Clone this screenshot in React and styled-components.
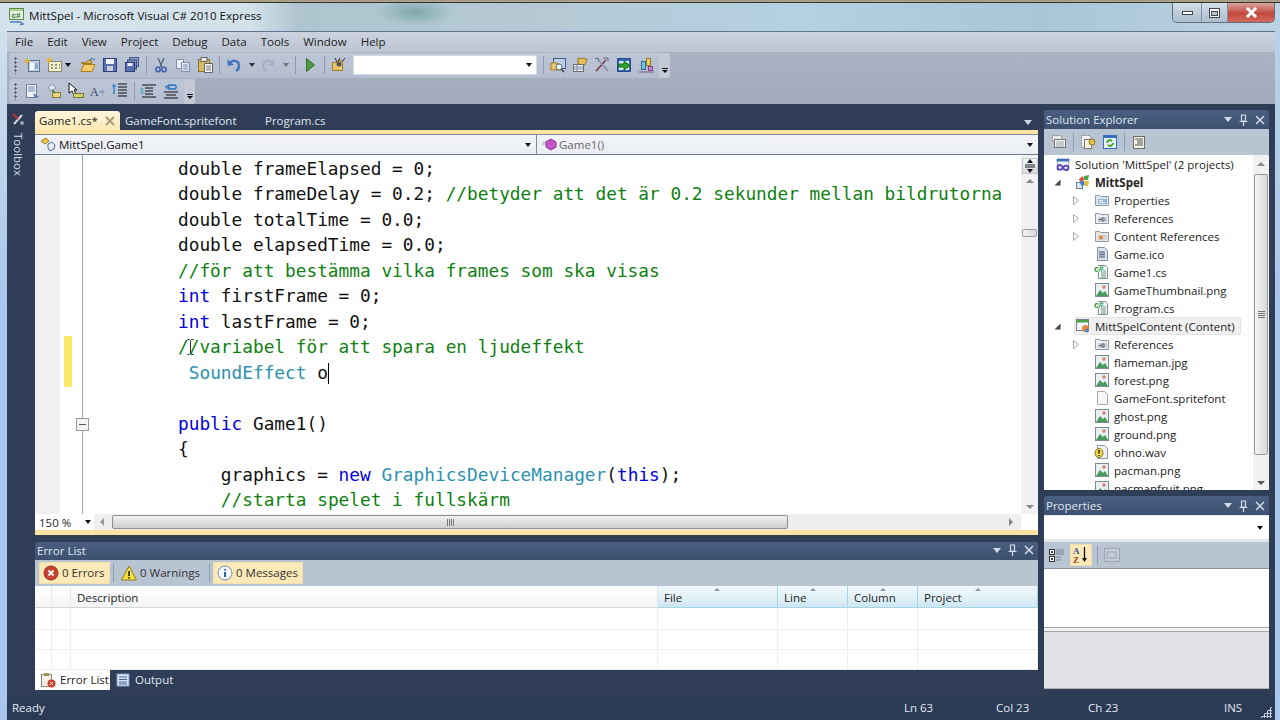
import React from 'react'
import styled, { createGlobalStyle } from 'styled-components'

const UI = '"Open Sans", "Noto Sans", sans-serif'
const MONO = '"DejaVu Sans Mono", "Liberation Mono", monospace'

const Global = createGlobalStyle`
    html, body { margin: 0; padding: 0; width: 1280px; height: 720px; overflow: hidden; }
    * { box-sizing: border-box; }
    body { font-family: ${UI}; font-size: 11.5px; color: #1e1e1e; }
`

const Window = styled.div`
    position: relative;
    width: 1280px;
    height: 720px;
    display: flex;
    flex-direction: column;
    overflow: hidden;
    padding: 3px 5px 0 7px;
    background:
        linear-gradient(#a89e86 0 2px, #35352f 2px 3px, transparent 3px),
        linear-gradient(#d5e3ec 0, #a9c6ec 300px) left / 7px 100% no-repeat,
        linear-gradient(#bcd3e4 0, #a9c6ec 300px) right / 5px 100% no-repeat,
        radial-gradient(ellipse 40px 14px at 415px 12px, #7fa9ab, transparent),
        linear-gradient(90deg, #d5e3ec 0, #d3e2ea 250px, #aec4cf 300px, #b5cad5 560px, #b4d0e2 800px, #a9c5d8 1040px, #bcd3e4 1280px);
`

const TitleBar = styled.div`
    height: 28px;
    flex: none;
    display: flex;
    align-items: center;
    gap: 3px;
    padding: 0 0 3px 1px;
    font-size: 11.6px;
    color: #111;
    position: relative;
`

const CaptionButtons = styled.div`
    position: absolute;
    top: 0;
    right: 0;
    display: flex;
    height: 20px;
    border: 1px solid #5f6f7f;
    border-top: none;
    border-radius: 0 0 5px 5px;
    overflow: hidden;
`

const CaptionButton = styled.div`
    width: ${p => p.$w}px;
    display: flex;
    align-items: center;
    justify-content: center;
    border-left: ${p => p.$first ? 'none' : '1px solid #7f8f9f'};
    background: ${p => p.$close
        ? 'linear-gradient(#d9a39a, #c34a3f 55%, #d06a5a)'
        : 'linear-gradient(#d2dfe8, #bccdd9 50%, #aebfcc)'};
`

const Client = styled.div`
    flex: 1;
    display: flex;
    flex-direction: column;
    border-top: 1px solid #5e7590;
    min-height: 0;
`

const MenuBar = styled.div`
    height: 20px;
    flex: none;
    display: flex;
    align-items: center;
    padding: 0 0 1px 8px;
    gap: 14px;
    background: linear-gradient(#ccd3de, #bcc4d2);
    color: #222;
    font-size: 11.5px;
`

const ToolbarTray = styled.div`
    height: 52px;
    flex: none;
    display: flex;
    flex-direction: column;
    background: linear-gradient(#aab3c3, #a0aaba);
`

const ToolbarRow = styled.div`
    height: 26px;
    display: flex;
    align-items: center;
`

const ToolStrip = styled.div`
    height: 25px;
    display: flex;
    align-items: center;
    padding-left: 5px;
    background: linear-gradient(#bcc6d6, #b3bdce);
    border-radius: 3px;
    margin-left: 2px;
`

const Grip = styled.div`
    width: 3px;
    height: 17px;
    margin-right: 4px;
    background: radial-gradient(circle at 1.5px 1.5px, #5a6578 1px, transparent 1.2px) 0 0 / 3px 4px;
`

const ToolIcon = styled.span`
    display: inline-flex;
    width: ${p => p.$w || 22}px;
    height: 20px;
    align-items: center;
    justify-content: center;
    flex: none;
`

const ToolSep = styled.div`
    width: 1px;
    height: 18px;
    margin: 0 3px;
    background: #8f9aae;
    flex: none;
`

const Overflow = styled.div`
    align-self: stretch;
    width: 11px;
    margin-left: 2px;
    background: #c3cad6;
    border-radius: 0 3px 3px 0;
    display: flex;
    flex-direction: column;
    justify-content: flex-end;
    align-items: center;
    padding-bottom: 5px;
    &::before { content: ''; width: 6px; height: 1px; background: #111; margin-bottom: 1px; }
    &::after { content: ''; border: 3px solid transparent; border-top-color: #111; border-bottom: none; }
`

const ToolCombo = styled.div`
    width: 184px;
    height: 20px;
    margin: 0 3px;
    background: #fff;
    border: 1px solid #d4d9e2;
    display: flex;
    align-items: center;
    justify-content: flex-end;
    padding-right: 4px;
`

const Caret = styled.span`
    display: block;
    width: 0;
    height: 0;
    flex: none;
    margin: 0 ${p => p.$mr || 0}px 0 ${p => p.$ml || 0}px;
    border: ${p => p.$big ? 4 : 3}px solid transparent;
    border-top: ${p => p.$big ? 5 : 4}px solid ${p => p.$color || '#111'};
    border-bottom: none;
`

const Dock = styled.div`
    flex: 1;
    display: flex;
    min-height: 0;
    background: #2f3d56;
`

const ToolboxStrip = styled.div`
    width: 28px;
    flex: none;
    display: flex;
    flex-direction: column;
    align-items: center;
    padding: 8px 5px 0 0;
    gap: 7px;
`

const ToolboxLabel = styled.div`
    writing-mode: vertical-lr;
    color: #d3dae6;
    font-size: 11.5px;
`

const Center = styled.div`
    width: 1003px;
    flex: none;
    display: flex;
    flex-direction: column;
`

const TabStrip = styled.div`
    height: 19px;
    margin-top: 7px;
    flex: none;
    display: flex;
    align-items: stretch;
    position: relative;
`

const DocTab = styled.div`
    width: ${p => p.$w}px;
    padding-left: ${p => p.$pl || 0}px;
    display: flex;
    align-items: center;
    justify-content: space-between;
    color: ${p => p.$active ? '#222' : '#dfe5ef'};
    border-radius: ${p => p.$active ? '3px 3px 0 0' : '0'};
    background: ${p => p.$active ? 'linear-gradient(#fdf6dc, #fce9b4)' : 'transparent'};
`

const TabClose = styled.span`
    margin-right: 5px;
    display: inline-flex;
`

const TabMenu = styled.div`
    position: absolute;
    right: 6px;
    top: 9px;
`

const GoldBar = styled.div`
    height: ${p => p.$h}px;
    flex: none;
    background: #fbe3a4;
`

const NavBar = styled.div`
    height: 21px;
    flex: none;
    display: flex;
    background: linear-gradient(#f2f4f8, #eaedf2);
    border-top: 1px solid #7d8aa0;
    border-bottom: 1px solid #6f7c90;
`

const NavCell = styled.div`
    width: ${p => p.$w};
    flex: ${p => p.$w ? 'none' : 1};
    display: flex;
    align-items: center;
    gap: 1px;
    padding: 0 5px;
    color: ${p => p.$muted ? '#666' : '#111'};
    border-right: ${p => p.$w ? '1px solid #7d8aa0' : 'none'};
`

const NavText = styled.span`
    flex: 1;
`

const EditorArea = styled.div`
    height: 359px;
    flex: none;
    display: flex;
    background: #fff;
    position: relative;
`

const Margin = styled.div`
    width: 25px;
    flex: none;
    background: #f0f0f0;
`

const Outline = styled.div`
    width: 118px;
    flex: none;
    position: relative;
    &::after {
        content: '';
        position: absolute;
        top: 0;
        bottom: 0;
        left: 22px;
        width: 1px;
        background: #a5a5a5;
    }
`

const ChangeBar = styled.div`
    position: absolute;
    left: 4px;
    top: 181px;
    width: 8px;
    height: 51px;
    background: #fce96a;
`

const Collapse = styled.div`
    position: absolute;
    left: 16px;
    top: 263px;
    width: 13px;
    height: 13px;
    z-index: 1;
    background: #f3f3f3;
    border: 1px solid #9a9a9a;
    display: flex;
    align-items: center;
    justify-content: center;
    &::after { content: ''; width: 7px; height: 1px; background: #555; }
`

const Code = styled.div`
    flex: 1;
    overflow: hidden;
    padding-top: 0.5px;
    font-family: ${MONO};
    font-size: 17.8px;
    color: #111;
`

const Line = styled.div`
    height: 25.5px;
    line-height: 25.5px;
    white-space: pre;
`

const Kw = styled.span` color: #0000e0; `
const Cm = styled.span` color: #0f7f12; `
const Ty = styled.span` color: #2b91af; `

const TextCaret = styled.span`
    display: inline-block;
    width: 1px;
    height: 21px;
    background: #000;
    vertical-align: -5px;
`

const IBeam = styled.svg`
    position: absolute;
    left: 152px;
    top: 184px;
`

const VScroll = styled.div`
    width: 17px;
    flex: none;
    display: flex;
    flex-direction: column;
    align-items: center;
    background: #f1f1f1;
    position: relative;
`

const Splitter = styled.div`
    width: 16px;
    height: 16px;
    margin-top: 3px;
    background: linear-gradient(#f4f5f7, #d5d8de);
    border: 1px solid #c3c7cf;
    display: flex;
    align-items: center;
    justify-content: center;
`

const ArrowUp = styled.span`
    width: 0;
    height: 0;
    border: 4px solid transparent;
    border-bottom: 4px solid #8a8a8a;
    border-top: none;
    margin-top: ${p => p.$mt || 0}px;
`

const ArrowDown = styled.span`
    position: absolute;
    bottom: ${p => p.$b}px;
    width: 0;
    height: 0;
    border: 4px solid transparent;
    border-top: 4px solid ${p => p.$c || '#8a8a8a'};
    border-bottom: none;
`

const VThumb = styled.div`
    position: absolute;
    top: ${p => p.$top}px;
    height: ${p => p.$h}px;
    left: 1px;
    right: 1px;
    background: linear-gradient(90deg, #f4f4f4, #d8d8d8);
    border: 1px solid #9a9a9a;
    border-radius: 2px;
    display: flex;
    align-items: center;
    justify-content: center;
`

const GripLines = styled.span`
    width: 7px;
    height: 7px;
    background: repeating-linear-gradient(#777 0 1px, transparent 1px 2px);
`

const HScrollRow = styled.div`
    height: 16px;
    flex: none;
    display: flex;
    align-items: stretch;
    background: #fff;
`

const ZoomBox = styled.div`
    width: 59px;
    flex: none;
    display: flex;
    align-items: center;
    justify-content: space-between;
    padding: 0 3px 0 4px;
    background: #fff;
`

const HTrack = styled.div`
    flex: 1;
    position: relative;
    background: #efefef;
    display: flex;
    align-items: center;
`

const HThumb = styled.div`
    position: absolute;
    left: 18px;
    width: 676px;
    top: 1px;
    bottom: 1px;
    background: linear-gradient(#f2f2f2, #cfcfcf);
    border: 1px solid #8f8f8f;
    border-radius: 2px;
    display: flex;
    align-items: center;
    justify-content: center;
`

const HGrip = styled.span`
    width: 7px;
    height: 7px;
    background: repeating-linear-gradient(90deg, #777 0 1px, transparent 1px 2px);
`

const ArrowSide = styled.span`
    position: absolute;
    ${p => p.$left ? `left: ${p.$left}px;` : `right: ${p.$right}px;`}
    width: 0;
    height: 0;
    border: 4px solid transparent;
    ${p => p.$left ? 'border-right: 4px solid #999; border-left: none;' : 'border-left: 4px solid #888; border-right: none;'}
`

const Corner = styled.div`
    width: 17px;
    flex: none;
    background: #fff;
`

const PaneGap = styled.div`
    height: ${p => p.$h}px;
    flex: none;
`

const PaneTitle = styled.div`
    height: ${p => p.$h || 18}px;
    flex: none;
    display: flex;
    align-items: center;
    justify-content: space-between;
    padding: 0 4px ${p => p.$h ? 0 : 2}px 2px;
    color: #dfe6f0;
    background: linear-gradient(#4a5f80, #3d5070);
    border-radius: 2px 2px 0 0;
`

const PaneActions = styled.div`
    display: flex;
    align-items: center;
    gap: 7px;
`

const FilterBar = styled.div`
    height: 26px;
    flex: none;
    display: flex;
    align-items: center;
    padding-left: 4px;
    background: #b9c4d2;
`

const FilterButton = styled.div`
    height: 22px;
    width: ${p => p.$w}px;
    padding: 0 0 1px 3px;
    display: flex;
    align-items: center;
    gap: 3px;
    color: #333;
    background: ${p => p.$on ? '#fce9b8' : 'transparent'};
    border: 1px solid ${p => p.$on ? '#f3dfae' : 'transparent'};
`

const FilterSep = styled.div`
    width: 1px;
    height: 18px;
    margin: 0 3px;
    background: #8f9aae;
`

const GridHead = styled.div`
    height: 22px;
    flex: none;
    display: grid;
    grid-template-columns: 17px 19px 587px 120px 70px 70px 120px;
`

const HeadCell = styled.div`
    position: relative;
    padding: 1px 0 0 6px;
    display: flex;
    align-items: center;
    color: #222;
    background: ${p => p.$hot
        ? 'linear-gradient(#eef8fc, #e4f2f8 50%, #cde6f1)'
        : 'linear-gradient(#fff, #f3f4f6)'};
    border-right: 1px solid ${p => p.$hot ? '#a6d5e6' : '#e4e6ea'};
    border-bottom: 1px solid ${p => p.$hot ? '#a6d5e6' : '#d5d5d5'};
`

const SortMark = styled.span`
    position: absolute;
    top: 2px;
    left: ${p => p.$l}px;
    width: 0;
    height: 0;
    border: 3px solid transparent;
    border-bottom: 3px solid #8f979f;
    border-top: none;
`

const GridBody = styled.div`
    height: 62px;
    flex: none;
    background: #fff;
    display: grid;
    grid-template-columns: 17px 19px 587px 120px 70px 70px 120px;
    grid-template-rows: 22px 20px 20px;
`

const BodyCell = styled.div`
    border-right: 1px solid #eee;
    border-bottom: 1px solid #eee;
`

const BottomTabs = styled.div`
    height: 20px;
    flex: none;
    display: flex;
`

const BottomTab = styled.div`
    width: ${p => p.$w}px;
    display: flex;
    align-items: center;
    gap: 4px;
    padding: 0 0 1px 5px;
    color: ${p => p.$active ? '#222' : '#dfe5ef'};
    background: ${p => p.$active ? '#fff' : 'transparent'};
`

const RightCol = styled.div`
    width: 225px;
    margin-left: 6px;
    flex: none;
    display: flex;
    flex-direction: column;
    padding-top: 6px;
`

const SideToolbar = styled.div`
    height: ${p => p.$h}px;
    flex: none;
    display: flex;
    align-items: center;
    padding-left: 4px;
    background: #b9c4d2;
    border-bottom: ${p => p.$line ? '1px solid #8f98a5' : 'none'};
`

const TreeWrap = styled.div`
    height: 335px;
    flex: none;
    display: flex;
    background: #fff;
    overflow: hidden;
`

const Tree = styled.div`
    flex: 1;
    min-width: 0;
`

const TreeRow = styled.div`
    height: 18px;
    display: flex;
    align-items: center;
    padding-left: ${p => p.$pad}px;
    font-weight: ${p => p.$bold ? 700 : 400};
`

const Expander = styled.span`
    width: 25px;
    flex: none;
    display: flex;
    justify-content: center;
    padding-right: 11px;
`

const TreeIcon = styled.span`
    width: 16px;
    height: 16px;
    margin-right: 4px;
    flex: none;
    display: inline-flex;
`

const TreeLabel = styled.span`
    color: #222;
    white-space: nowrap;
`

const Selected = styled.div`
    display: flex;
    align-items: center;
    height: 18px;
    width: 167px;
    margin-left: -1px;
    background: #f0f0f0;
    border: 1px solid #e3e3e3;
    border-radius: 2px;
    flex: none;
`

const TreeScroll = styled(VScroll)`
    width: 16px;
    background: #f1f1f1;
    padding-top: 7px;
`

const PropCombo = styled.div`
    height: 27px;
    flex: none;
    display: flex;
    align-items: center;
    justify-content: flex-end;
    padding-right: 6px;
    background: #fff;
    border-top: 1px solid #e8e8e8;
    border-bottom: 3px solid #e8e8ea;
`

const ActiveSort = styled.span`
    display: inline-flex;
    width: 22px;
    height: 22px;
    margin: 0 2px 0 4px;
    align-items: center;
    justify-content: center;
    background: #fce9b8;
    border: 1px solid #eedcae;
`

const PropGrid = styled.div`
    height: 58px;
    flex: none;
    background: #fff;
`

const PropDesc = styled.div`
    height: 62px;
    flex: none;
    background: #e0e1e5;
    border-top: 1px solid #a5a5a5;
    border-bottom: 1px solid #b0b0b0;
    &::before { content: ''; display: block; height: 3px; border-bottom: 1px solid #a5a5a5; background: #f2f2f2; }
`

const StatusBar = styled.div`
    height: 23px;
    flex: none;
    display: flex;
    align-items: center;
    padding-bottom: 2px;
    background: #2b3a55;
    color: #e4e9f1;
    position: relative;
`

const StatusText = styled.span`
    width: ${p => p.$w}px;
    padding-left: ${p => p.$pl || 0}px;
    flex: none;
`

const ResizeGrip = styled.span`
    position: absolute;
    right: 3px;
    bottom: 2px;
    width: 12px;
    height: 12px;
    background: radial-gradient(circle, #c8d0dc 1px, transparent 1.2px) 0 0 / 3px 3px;
    clip-path: polygon(100% 0, 100% 100%, 0 100%);
`

// icons

const Svg = ({ w = 16, h = 16, children }) => (
    <svg width={w} height={h} viewBox={`0 0 ${w} ${h}`} style={{ display: 'block' }}>{children}</svg>
)

const Page = ({ fill = '#fbfcfe', stroke = '#7f8fa3' }) => (
    <path d="M3.5 1.5h7l3 3v10h-10z" fill={fill} stroke={stroke} />
)

const Icons = {
    newProject: <Svg><rect x="4.5" y="3.5" width="11" height="11" fill="#c5d3e6" stroke="#5a7390" /><rect x="6" y="6" width="4" height="7" fill="#f4f6fa" /><path d="M11 7h3M11 9h3M11 11h3" stroke="#5d7ba0" /><path d="M3 1v6M0 4h6" stroke="#e9b429" strokeWidth="1.5" /></Svg>,
    addItem: <Svg><rect x="2.5" y="4.5" width="13" height="10" fill="#f0efd6" stroke="#8a8a66" /><path d="M5 8h2M9 8h2M13 8h1M5 11h2M9 11h2M13 11h1" stroke="#6f8b42" strokeWidth="1.5" /><path d="M3 0v6M0 3h6" stroke="#e9b429" strokeWidth="1.5" /></Svg>,
    open: <Svg><path d="M1.5 5.5h5l1-2h4v3h-10z" fill="#e0b64e" stroke="#a67c1e" /><path d="M1 14.5l2.5-7h11.5l-3 7z" fill="#f5cc68" stroke="#a67c1e" /><path d="M9 4c2-3 4-3 6-1" stroke="#5b7fa8" fill="none" strokeWidth="1.2" /></Svg>,
    save: <Svg><rect x="1.5" y="1.5" width="13" height="13" fill="#5a6fae" stroke="#2e3f78" /><rect x="4" y="2" width="8" height="5" fill="#f2f3f8" /><rect x="5" y="9" width="6" height="5" fill="#c9cfdf" /></Svg>,
    saveAll: <Svg><rect x="5.5" y="0.5" width="9" height="9" fill="#8b9cc6" stroke="#4a5a8f" /><rect x="3.5" y="3" width="9" height="9" fill="#7285b8" stroke="#3f4f88" /><rect x="1.5" y="5.5" width="9" height="9" fill="#5a6fae" stroke="#2e3f78" /><rect x="3.5" y="6" width="5" height="3" fill="#eef" /></Svg>,
    cut: <Svg><path d="M5 1l4 9M11 1l-4 9" stroke="#59657b" strokeWidth="1.4" /><circle cx="5" cy="12.5" r="2.2" fill="none" stroke="#3d5fb0" strokeWidth="1.5" /><circle cx="11" cy="12.5" r="2.2" fill="none" stroke="#3d5fb0" strokeWidth="1.5" /></Svg>,
    copy: <Svg><path d="M1.5 2.5h7v9h-7z" fill="#eef2f8" stroke="#7f8fa8" /><path d="M6.5 5.5h8v9h-8z" fill="#dfe7f3" stroke="#7f8fa8" /><path d="M8 8h5M8 10h5M8 12h5" stroke="#7f93b4" /></Svg>,
    paste: <Svg><rect x="1.5" y="2.5" width="11" height="12" fill="#d9b968" stroke="#8d6f2a" /><rect x="4" y="0.5" width="6" height="4" fill="#e8e8e8" stroke="#666" /><path d="M7.5 6.5h8v9h-8z" fill="#fbfbfd" stroke="#666" /><path d="M9 9h5M9 11h5M9 13h5" stroke="#777" /></Svg>,
    undo: <Svg><path d="M3 7c3-5 10-4 10 2 0 2-1 4-3 5" fill="none" stroke="#4577b8" strokeWidth="2.4" /><path d="M1 2l1 7 6-1z" fill="#4577b8" /></Svg>,
    redo: <Svg><path d="M13 7C10 2 3 3 3 9c0 2 1 4 3 5" fill="none" stroke="#a9b1bf" strokeWidth="2.2" /><path d="M15 2l-1 7-6-1z" fill="#a9b1bf" /></Svg>,
    play: <Svg><path d="M4.5 1.5l8 6.5-8 6.5z" fill="#4f9a3f" stroke="#2f6f2f" /></Svg>,
    findProps: <Svg><path d="M1.5 5.5h5l1-2h3l1 2v8h-10z" fill="#e9c66c" stroke="#a67c1e" /><path d="M4 1l2 4M9 1l-2 3M14 1l-3 4" stroke="#333" /><circle cx="8" cy="7" r="2.5" fill="#555" /></Svg>,
    findFiles: <Svg><rect x="3.5" y="1.5" width="12" height="10" fill="#bcd0ea" stroke="#41618f" /><path d="M1 6h7l1 2v5H1z" fill="#e9c66c" stroke="#a67c1e" /><circle cx="9" cy="10" r="3" fill="#eef5fb" stroke="#5a6a80" /><path d="M11 12l3 3" stroke="#444" strokeWidth="1.5" /></Svg>,
    table: <Svg><path d="M6 1l9 1-2 6-7-1z" fill="#e5be58" stroke="#9a7a28" /><rect x="1.5" y="7.5" width="10" height="7" fill="#f6f6f6" stroke="#6d6d6d" /><path d="M2 10h9M2 12h9M5 8v6" stroke="#7d8ca8" /></Svg>,
    tools: <Svg><path d="M2 14L12 3" stroke="#7a3f4f" strokeWidth="1.8" /><path d="M14 14L4 3" stroke="#8a94a6" strokeWidth="1.8" /><path d="M9 1h5v3" fill="none" stroke="#666" /><path d="M1 2l3-1 1 3" fill="none" stroke="#666" /></Svg>,
    arrowBox: <Svg><rect x="1.5" y="1.5" width="13" height="13" fill="#3468b5" stroke="#274f8f" /><rect x="3" y="4" width="10" height="9" fill="#dfeaf6" /><path d="M3 7h5V4l6 4.5L8 13v-3H3z" fill="#2fa32f" stroke="#14700e" /></Svg>,
    classes: <Svg><rect x="3.5" y="4.5" width="4" height="8" fill="#7dc0dc" stroke="#2f6f96" /><rect x="8.5" y="1.5" width="4" height="7" fill="#f0cc5a" stroke="#987a1f" /><rect x="10.5" y="9.5" width="4" height="4" fill="#d37ed2" stroke="#8a3f8a" /><path d="M1 15h15" stroke="#9078a8" strokeWidth="1.5" /></Svg>,
    list: <Svg><rect x="2.5" y="1.5" width="10" height="13" fill="#f1f3f7" stroke="#6f7e95" /><path d="M4 4h7M4 6h7M4 8h7" stroke="#6f85a8" /><path d="M9 10l6 4-4 1z" fill="#4e78ae" /></Svg>,
    refs: <Svg><path d="M2 4l5-3 3 4-5 3z" fill="#dde3ec" stroke="#8b96a8" /><rect x="6.5" y="9.5" width="8" height="5" fill="#e9d27c" stroke="#8a7a36" /><path d="M6 7l3 3" stroke="#3c7c3c" strokeWidth="1.5" /></Svg>,
    cursorRef: <Svg><path d="M1 0l0 10 3-2 2 4 2-1-2-4h3z" fill="#fff" stroke="#111" /><rect x="5.5" y="10.5" width="10" height="4" fill="#cfd268" stroke="#757a32" /></Svg>,
    rename: <Svg><text x="0" y="13" fontFamily="Liberation Serif" fontSize="12" fill="#354a70">A</text><path d="M9 8h3V6l3 3-3 3v-2H9z" fill="#8ea0bd" /></Svg>,
    outdent: <Svg><path d="M6 1h9M6 4h9M6 7h9M6 10h9M6 13h9" stroke="#111" strokeWidth="1.2" /><path d="M2 2v9" stroke="#2d86c9" strokeWidth="1.5" /><path d="M0 4l2-3 2 3" fill="none" stroke="#2d86c9" /></Svg>,
    comment: <Svg w={18}><path d="M2 2h14M5 5h8M5 8h8M5 11h8M2 14h14" stroke="#111" strokeWidth="1.1" /><path d="M2 5v6" stroke="#1ea0a8" strokeWidth="3" opacity="0.5" /></Svg>,
    uncomment: <Svg w={18}><path d="M2 9h14M4 12h10M2 15h14" stroke="#111" strokeWidth="1.1" /><path d="M12 6H7V2l-3 2 3 2" fill="none" stroke="#1e6fc0" strokeWidth="1.3" /><path d="M12 6c3 0 3-4 0-4H8" fill="none" stroke="#1e6fc0" strokeWidth="1.3" /></Svg>,
    cs: <Svg><path d="M4.5 1.5h7l2 2v11h-9z" fill="#f4f7f2" stroke="#7f8f93" /><path d="M7 7h5M7 9h5M7 11h5M7 13h5" stroke="#6f9a7a" /><rect x="0" y="2" width="9" height="6" fill="#fff" opacity="0.85" /><text x="0" y="8" fontFamily="Liberation Sans" fontSize="8.5" fontWeight="700" fill="#17913a">c#</text></Svg>,
    image: <Svg><rect x="1.5" y="1.5" width="13" height="13" fill="#eaf1f5" stroke="#7f8b92" /><path d="M2 14l4-6 3 3 2-2 3 5z" fill="#4d9a5f" /><circle cx="10" cy="5" r="1.8" fill="#d9806f" /></Svg>,
    blank: <Svg><Page fill="#f7f7f7" stroke="#a6a6a6" /></Svg>,
    ico: <Svg><Page fill="#dbe2ee" stroke="#7f8fa3" /><path d="M5 6h6M5 8.5h6M5 11h6M6 5v7M8 5v7M10 5v7" stroke="#6d7a92" /></Svg>,
    wav: <Svg><Page fill="#f1f2f6" stroke="#8b98aa" /><ellipse cx="5" cy="9" rx="4" ry="4.5" fill="#ecd74f" stroke="#8a7a1f" /><path d="M5 6v3.5M5 11v1" stroke="#222" strokeWidth="1.4" /></Svg>,
    folderProps: <Svg><path d="M1.5 3.5h4l1 1h8v9h-13z" fill="#dde6f3" stroke="#8d99ab" /><rect x="4" y="7" width="9" height="5" fill="#8fb4e0" /><path d="M5 8.5h4M5 10.5h6" stroke="#fff" /></Svg>,
    folderRefs: <Svg><path d="M1.5 3.5h4l1 1h8v9h-13z" fill="#eceef1" stroke="#8d99ab" /><rect x="4" y="7" width="9" height="5" fill="#c9ced6" /><path d="M5 9.5h3M8 8h2v3H8z" stroke="#4f5a68" fill="#fff" /></Svg>,
    folderContent: <Svg><path d="M1.5 3.5h4l1 1h8v9h-13z" fill="#eee6dc" stroke="#8d99ab" /><rect x="4" y="7" width="9" height="5" fill="#d0d3d9" /><circle cx="7" cy="9.5" r="2" fill="#e58a3c" /></Svg>,
    project: <Svg><rect x="1.5" y="8.5" width="6" height="6" fill="#dfe7f3" stroke="#6c7d95" /><path d="M4 5l4-3 1 4-4 2z" fill="#d44a3a" /><path d="M9 2l5-1-1 5-4 0z" fill="#4aa545" /><path d="M4.5 8l4.5-1.5 1 4-3 2z" fill="#3b7fd0" /><path d="M9 7l5 0-1 5-3 0z" fill="#e8bf33" /></Svg>,
    contentProject: <Svg><rect x="1.5" y="1.5" width="12" height="11" fill="#f2f5f9" stroke="#76849a" /><rect x="2" y="2" width="11" height="2.5" fill="#4ea24a" /><circle cx="10.5" cy="10.5" r="3.5" fill="#e58a3c" /><circle cx="12" cy="12.5" r="2" fill="#4a86c8" /></Svg>,
    solution: <Svg w={18} h={18}><path d="M2.5 2.5h13v12h-13z" fill="#eaf0f8" stroke="#8296b4" /><path d="M2 2h14v3H2z" fill="#3e6fb0" /><path d="M3 12c0-4 4-4 6 0s6 3 6 0-4-3-6 0-6 3-6 0z" fill="none" stroke="#5a3fb8" strokeWidth="2" /></Svg>,
    showAll: <Svg><rect x="1.5" y="1.5" width="9" height="6" fill="#e8e8e8" stroke="#8b8b8b" strokeDasharray="2 1" /><rect x="3.5" y="5.5" width="11" height="8" fill="#f3f3ee" stroke="#777" /><path d="M5 8h8M5 10h8M5 12h8" stroke="#98a0a8" /></Svg>,
    pages: <Svg><rect x="1.5" y="1.5" width="9" height="12" fill="#eef1f6" stroke="#8b8b8b" strokeDasharray="2 1" /><path d="M4.5 5.5h7v9h-7z" fill="#f7f3e2" stroke="#767676" /><circle cx="12" cy="8" r="3" fill="#e2c447" stroke="#8c7726" /></Svg>,
    refresh: <Svg><rect x="1.5" y="1.5" width="13" height="13" fill="#e8f0f9" stroke="#3570bd" /><rect x="2" y="2" width="12" height="2" fill="#3570bd" /><path d="M5 9a3 3 0 0 1 5-2M11 9a3 3 0 0 1-5 2" fill="none" stroke="#3aa01f" strokeWidth="1.8" /></Svg>,
    viewCode: <Svg><rect x="2.5" y="2.5" width="11" height="12" fill="#f6f3e4" stroke="#6c6c6c" /><path d="M4 5h8M6 7h6M6 9h6M4 11h8" stroke="#555" /></Svg>,
    categorized: <Svg w={18}><rect x="1.5" y="2.5" width="5" height="5" fill="#f3f3f3" stroke="#333" /><rect x="1.5" y="9.5" width="5" height="5" fill="#f3f3f3" stroke="#333" /><path d="M3 5h2M4 4v2M3 12h2M4 11v2" stroke="#111" /><path d="M8 3h8M8 5h8M8 7h8M8 10h5M8 13h5" stroke="#7d8696" /></Svg>,
    azSort: <Svg w={18} h={18}><text x="1" y="8" fontFamily="Liberation Serif" fontSize="9" fontWeight="700" fill="#33508c">A</text><text x="1" y="17" fontFamily="Liberation Serif" fontSize="9" fontWeight="700" fill="#a33a1e">Z</text><path d="M12.5 1v13" stroke="#111" strokeWidth="1.3" /><path d="M10 12l2.5 4 2.5-4z" fill="#111" /></Svg>,
    pagesProp: <Svg w={18} h={18}><rect x="1.5" y="2.5" width="15" height="13" fill="#c6ccd6" stroke="#9da5b2" /><rect x="4" y="6" width="9" height="6" fill="none" stroke="#9da5b2" /></Svg>,
    error: <Svg><circle cx="8" cy="8" r="7" fill="#c8422f" stroke="#9a2d20" /><path d="M5.5 5.5l5 5M10.5 5.5l-5 5" stroke="#fff" strokeWidth="1.8" /></Svg>,
    warning: <Svg w={16}><path d="M8 1l7.5 14H.5z" fill="#f5de3c" stroke="#8a7c1c" /><path d="M8 6v5M8 12v1.5" stroke="#222" strokeWidth="1.6" /></Svg>,
    info: <Svg><circle cx="8" cy="8" r="7" fill="#f4f8fc" stroke="#6f8ab2" /><path d="M8 7v5M8 4v1.6" stroke="#2f5fa8" strokeWidth="2" /></Svg>,
    errorTab: <Svg><rect x="1.5" y="2.5" width="10" height="12" fill="#f2f0e6" stroke="#8a8a80" /><rect x="4" y="1" width="5" height="3" fill="#a58f54" /><circle cx="11.5" cy="11.5" r="4" fill="#d2402e" /><path d="M10 10l3 3M13 10l-3 3" stroke="#fff" /></Svg>,
    output: <Svg><rect x="2" y="2" width="12" height="12" fill="#dbe6f4" stroke="#7da0d0" /><path d="M4 5h8M4 7.5h8M4 10h8M4 12h8" stroke="#3b5f95" strokeWidth="1.2" /></Svg>,
    appIcon: <Svg w={18} h={18}><rect x="1.5" y="1.5" width="14" height="11" fill="#e6f1de" stroke="#5d8a45" /><rect x="2" y="2" width="13" height="2" fill="#6fb74f" opacity="0.5" /><text x="3.5" y="11" fontFamily="Liberation Sans" fontSize="8" fontWeight="700" fill="#1f7a2a">c#</text><path d="M2 15h10l3 2-3 1" stroke="#4a7cc0" fill="none" strokeWidth="1.5" /></Svg>,
    pin: <svg width="9" height="12" viewBox="0 0 9 12" style={{ display: 'block' }}><path d="M2.5 1h4v6h-4zM0.5 7.5h8M4.5 8v4" fill="none" stroke="#d5dce8" strokeWidth="1.2" /></svg>,
    close: <svg width="10" height="10" viewBox="0 0 10 10" style={{ display: 'block' }}><path d="M1 1l8 8M9 1l-8 8" stroke="#d5dce8" strokeWidth="1.5" /></svg>,
    tabClose: <svg width="10" height="10" viewBox="0 0 10 10" style={{ display: 'block' }}><path d="M1 1l8 8M9 1l-8 8" stroke="#a89a72" strokeWidth="1.8" /></svg>,
    splitter: <svg width="10" height="14" viewBox="0 0 10 14" style={{ display: 'block' }}><path d="M0 6h10M0 8h10" stroke="#222" /><path d="M5 0l3 4H2zM5 14l3-4H2z" fill="#111" /></svg>,
}

const Tool = ({ name, w }) => <ToolIcon $w={w}>{Icons[name]}</ToolIcon>

const Actions = () => (
    <PaneActions>
        <Caret $big $color="#d5dce8" />
        {Icons.pin}
        {Icons.close}
    </PaneActions>
)

const tree = [
    { pad: 11, icon: 'solution', label: "Solution 'MittSpel' (2 projects)", root: true },
    { pad: 6, icon: 'project', label: 'MittSpel', open: true, bold: true },
    { pad: 25, icon: 'folderProps', label: 'Properties', arrow: true },
    { pad: 25, icon: 'folderRefs', label: 'References', arrow: true },
    { pad: 25, icon: 'folderContent', label: 'Content References', arrow: true },
    { pad: 25, icon: 'ico', label: 'Game.ico' },
    { pad: 25, icon: 'cs', label: 'Game1.cs' },
    { pad: 25, icon: 'image', label: 'GameThumbnail.png' },
    { pad: 25, icon: 'cs', label: 'Program.cs' },
    { pad: 6, icon: 'contentProject', label: 'MittSpelContent (Content)', open: true, selected: true },
    { pad: 25, icon: 'folderRefs', label: 'References', arrow: true },
    { pad: 25, icon: 'image', label: 'flameman.jpg' },
    { pad: 25, icon: 'image', label: 'forest.png' },
    { pad: 25, icon: 'blank', label: 'GameFont.spritefont' },
    { pad: 25, icon: 'image', label: 'ghost.png' },
    { pad: 25, icon: 'image', label: 'ground.png' },
    { pad: 25, icon: 'wav', label: 'ohno.wav' },
    { pad: 25, icon: 'image', label: 'pacman.png' },
    { pad: 25, icon: 'image', label: 'pacmanfruit.png' },
]

const TreeArrow = ({ open }) => open
    ? <svg width="7" height="7" viewBox="0 0 7 7"><path d="M6.5 0.5v6h-6z" fill="#444" /></svg>
    : <svg width="6" height="9" viewBox="0 0 6 9"><path d="M0.5 0.5l5 4-5 4z" fill="#fff" stroke="#a6a6a6" /></svg>

function TreeItem({ item }) {
    const body = (
        <>
            <TreeIcon>{Icons[item.icon]}</TreeIcon>
            <TreeLabel>{item.label}</TreeLabel>
        </>
    )
    return (
        <TreeRow $pad={item.pad} $bold={item.bold}>
            {!item.root && (
                <Expander>
                    {(item.open || item.arrow) && <TreeArrow open={item.open} />}
                </Expander>
            )}
            {item.selected ? <Selected>{body}</Selected> : body}
        </TreeRow>
    )
}

function App() {
    return (
        <Window>
            <Global />
            <TitleBar>
                {Icons.appIcon}
                <span>MittSpel - Microsoft Visual C# 2010 Express</span>
                <CaptionButtons>
                    <CaptionButton $w={28} $first>
                        <svg width="11" height="4"><rect x="0.5" y="0.5" width="10" height="3" fill="#fff" stroke="#445" /></svg>
                    </CaptionButton>
                    <CaptionButton $w={26}>
                        <svg width="11" height="10"><rect x="0.5" y="0.5" width="10" height="9" fill="#fff" stroke="#445" /><rect x="2.5" y="3.5" width="6" height="4" fill="#b5c7d5" stroke="#445" /></svg>
                    </CaptionButton>
                    <CaptionButton $w={47} $close>
                        <svg width="13" height="11"><path d="M2 1l9 9M11 1l-9 9" stroke="#fff" strokeWidth="3" /></svg>
                    </CaptionButton>
                </CaptionButtons>
            </TitleBar>
            <Client>
                <MenuBar>
                    {['File', 'Edit', 'View', 'Project', 'Debug', 'Data', 'Tools', 'Window', 'Help'].map(m => <span key={m}>{m}</span>)}
                </MenuBar>
                <ToolbarTray>
                    <ToolbarRow>
                        <ToolStrip>
                            <Grip />
                            <Tool name="newProject" />
                            <Tool name="addItem" />
                            <Caret $mr={6} />
                            <Tool name="open" />
                            <Tool name="save" />
                            <Tool name="saveAll" />
                            <ToolSep />
                            <Tool name="cut" />
                            <Tool name="copy" />
                            <Tool name="paste" />
                            <ToolSep />
                            <Tool name="undo" />
                            <Caret $color="#333" $ml={4} $mr={2} />
                            <Tool name="redo" />
                            <Caret $color="#777" $ml={4} $mr={3} />
                            <ToolSep />
                            <Tool name="play" />
                            <ToolSep />
                            <Tool name="findProps" />
                            <ToolCombo><Caret /></ToolCombo>
                            <ToolSep />
                            <Tool name="findFiles" />
                            <Tool name="table" />
                            <Tool name="tools" />
                            <Tool name="arrowBox" />
                            <Tool name="classes" />
                            <Overflow />
                        </ToolStrip>
                    </ToolbarRow>
                    <ToolbarRow>
                        <ToolStrip>
                            <Grip />
                            <Tool name="list" />
                            <Tool name="refs" />
                            <Tool name="cursorRef" />
                            <Tool name="rename" />
                            <Tool name="outdent" />
                            <ToolSep />
                            <Tool name="comment" />
                            <Tool name="uncomment" />
                            <Overflow />
                        </ToolStrip>
                    </ToolbarRow>
                </ToolbarTray>
                <Dock>
                    <ToolboxStrip>
                        <svg width="14" height="14" viewBox="0 0 14 14"><path d="M2 12l8-9" stroke="#cfd6e0" strokeWidth="2" /><path d="M1 2l5 5" stroke="#b33" strokeWidth="2" /><circle cx="10" cy="11" r="2" fill="#9aa4b4" /></svg>
                        <ToolboxLabel>Toolbox</ToolboxLabel>
                    </ToolboxStrip>
                    <Center>
                        <TabStrip>
                            <DocTab $w={85} $pl={4} $active>
                                Game1.cs*
                                <TabClose>{Icons.tabClose}</TabClose>
                            </DocTab>
                            <DocTab $w={145} $pl={5}>GameFont.spritefont</DocTab>
                            <DocTab $w={120}>Program.cs</DocTab>
                            <TabMenu><Caret $big $color="#cfd6e2" /></TabMenu>
                        </TabStrip>
                        <GoldBar $h={4} />
                        <NavBar>
                            <NavCell $w="502px">
                                <svg width="18" height="15" viewBox="0 0 18 15"><path d="M1 4l5-3 3 3-4 3z" fill="#eec64c" stroke="#a08020" /><path d="M8 7l4-2 3 3-1 4-4 2-2-3z" fill="#e8eef6" stroke="#4d6f9c" /></svg>
                                <NavText>MittSpel.Game1</NavText>
                                <Caret />
                            </NavCell>
                            <NavCell $muted>
                                <svg width="16" height="14" viewBox="0 0 16 14"><path d="M1 4h3M0 6h3" stroke="#aaa" /><path d="M9 1l5 3v5l-5 3-5-3V4z" fill="#c654c6" stroke="#8a2f8a" /></svg>
                                <NavText>Game1()</NavText>
                                <Caret />
                            </NavCell>
                        </NavBar>
                        <EditorArea>
                            <Margin />
                            <Outline>
                                <ChangeBar />
                                <Collapse />
                            </Outline>
                            <Code>
                                <Line>{'double frameElapsed = 0;'}</Line>
                                <Line>{'double frameDelay = 0.2; '}<Cm>//betyder att det är 0.2 sekunder mellan bildrutorna</Cm></Line>
                                <Line>{'double totalTime = 0.0;'}</Line>
                                <Line>{'double elapsedTime = 0.0;'}</Line>
                                <Line><Cm>//för att bestämma vilka frames som ska visas</Cm></Line>
                                <Line><Kw>int</Kw>{' firstFrame = 0;'}</Line>
                                <Line><Kw>int</Kw>{' lastFrame = 0;'}</Line>
                                <Line><Cm>//variabel för att spara en ljudeffekt</Cm></Line>
                                <Line>{' '}<Ty>SoundEffect</Ty>{' o'}<TextCaret /></Line>
                                <Line />
                                <Line><Kw>public</Kw>{' Game1()'}</Line>
                                <Line>{'{'}</Line>
                                <Line>{'    graphics = '}<Kw>new</Kw>{' '}<Ty>GraphicsDeviceManager</Ty>{'('}<Kw>this</Kw>{');'}</Line>
                                <Line>{'    '}<Cm>//starta spelet i fullskärm</Cm></Line>
                            </Code>
                            <IBeam width="7" height="16" viewBox="0 0 7 16">
                                <path d="M0.5 0.5h2l1 1 1-1h2M3.5 1.5v13M0.5 15.5h2l1-1 1 1h2" fill="none" stroke="#333" />
                            </IBeam>
                            <VScroll>
                                <Splitter>{Icons.splitter}</Splitter>
                                <ArrowUp $mt={5} />
                                <VThumb $top={74} $h={8} />
                                <ArrowDown $b={5} />
                            </VScroll>
                        </EditorArea>
                        <HScrollRow>
                            <ZoomBox>150 %<Caret /></ZoomBox>
                            <HTrack>
                                <ArrowSide $left={6} />
                                <HThumb><HGrip /></HThumb>
                                <ArrowSide $right={8} />
                            </HTrack>
                            <Corner />
                        </HScrollRow>
                        <GoldBar $h={5} />
                        <PaneGap $h={7} />
                        <PaneTitle>
                            Error List
                            <Actions />
                        </PaneTitle>
                        <FilterBar>
                            <FilterButton $w={71} $on>{Icons.error}0 Errors</FilterButton>
                            <FilterSep />
                            <FilterButton $w={89}>{Icons.warning}0 Warnings</FilterButton>
                            <FilterSep />
                            <FilterButton $w={90} $on>{Icons.info}0 Messages</FilterButton>
                        </FilterBar>
                        <GridHead>
                            <HeadCell />
                            <HeadCell />
                            <HeadCell>Description</HeadCell>
                            <HeadCell $hot>File<SortMark $l={56} /></HeadCell>
                            <HeadCell $hot>Line<SortMark $l={32} /></HeadCell>
                            <HeadCell $hot>Column<SortMark $l={32} /></HeadCell>
                            <HeadCell $hot>Project<SortMark $l={57} /></HeadCell>
                        </GridHead>
                        <GridBody>
                            {Array.from({ length: 21 }).map((_, i) => <BodyCell key={i} />)}
                        </GridBody>
                        <BottomTabs>
                            <BottomTab $w={75} $active>{Icons.errorTab}Error List</BottomTab>
                            <BottomTab $w={70}>{Icons.output}Output</BottomTab>
                        </BottomTabs>
                    </Center>
                    <RightCol>
                        <PaneTitle $h={19}>
                            Solution Explorer
                            <Actions />
                        </PaneTitle>
                        <SideToolbar $h={26}>
                            <Tool name="showAll" />
                            <ToolSep />
                            <Tool name="pages" />
                            <Tool name="refresh" />
                            <ToolSep />
                            <Tool name="viewCode" />
                        </SideToolbar>
                        <TreeWrap>
                            <Tree>
                                {tree.map((item, i) => <TreeItem key={i} item={item} />)}
                            </Tree>
                            <TreeScroll>
                                <ArrowUp />
                                <VThumb $top={19} $h={281}><GripLines /></VThumb>
                                <ArrowDown $b={5} $c="#555" />
                            </TreeScroll>
                        </TreeWrap>
                        <PaneGap $h={6} />
                        <PaneTitle $h={19}>
                            Properties
                            <Actions />
                        </PaneTitle>
                        <PropCombo><Caret /></PropCombo>
                        <SideToolbar $h={27} $line>
                            <Tool name="categorized" w={18} />
                            <ActiveSort>{Icons.azSort}</ActiveSort>
                            <ToolSep />
                            <Tool name="pagesProp" />
                        </SideToolbar>
                        <PropGrid />
                        <PropDesc />
                    </RightCol>
                </Dock>
                <StatusBar>
                    <StatusText $w={897} $pl={5}>Ready</StatusText>
                    <StatusText $w={92}>Ln 63</StatusText>
                    <StatusText $w={92}>Col 23</StatusText>
                    <StatusText $w={136}>Ch 23</StatusText>
                    <StatusText $w={30}>INS</StatusText>
                    <ResizeGrip />
                </StatusBar>
            </Client>
        </Window>
    )
}

export default App
